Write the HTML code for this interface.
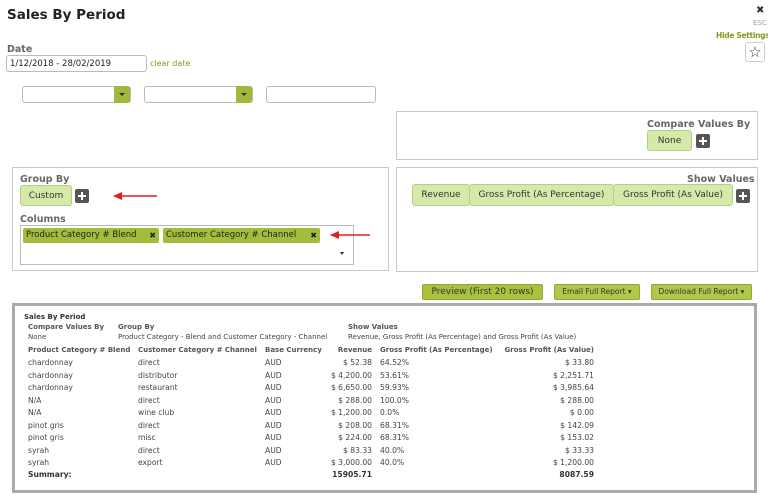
<!DOCTYPE html>
<html><head><meta charset="utf-8"><style>
*{box-sizing:border-box;margin:0;padding:0}
body{width:768px;height:495px;background:#fff;font-family:"DejaVu Sans","Liberation Sans",sans-serif;color:#333;position:relative;overflow:hidden}
.a{position:absolute;white-space:nowrap}
.lbl{font-weight:bold;color:#666;font-size:9.5px}
.inp{position:absolute;border:1px solid #bbb;border-radius:3px;background:#fff;height:17px}
.dd{position:absolute;right:0;top:-1px;width:16px;height:17px;background:#9fba3a;border-radius:0 3px 3px 0}
.dd:after{content:"";position:absolute;left:5px;top:7px;border:3px solid transparent;border-top:3px solid #333}
.box{position:absolute;border:1px solid #c8c8c8}
.gb{position:absolute;background:#d5eaa8;border:1px solid #b7cc8a;border-radius:3px;font-size:9px;color:#333;text-align:center;white-space:nowrap}
.plus{position:absolute;width:14px;height:14px;background:#555;border-radius:2px}
.plus:before{content:"";position:absolute;left:3px;top:6px;width:8px;height:2px;background:#fff}
.plus:after{content:"";position:absolute;left:6px;top:3px;width:2px;height:8px;background:#fff}
.btn{position:absolute;background:#a8c23e;border:1px solid #8fa832;border-radius:2px;font-size:8.5px;text-align:center;color:#333;line-height:14px;white-space:nowrap}
.tag{position:absolute;background:#a3bd3a;border-radius:2px;font-size:8.5px;color:#222;line-height:15px;padding-left:3px;white-space:nowrap}
.r{position:absolute;font-size:7.6px;color:#444;white-space:nowrap}
.b{font-weight:bold;color:#555;font-size:7px}
.rt{text-align:right}
</style></head><body>
<div class="a" style="left:7px;top:7px;font-size:13.5px;font-weight:bold;color:#222">Sales By Period</div>
<div class="a" style="left:756px;top:5px;font-size:10px;font-weight:bold">✖</div>
<div class="a" style="left:753px;top:19px;font-size:7px;color:#999">ESC</div>
<div class="a" style="left:716px;top:31px;font-size:7.5px;color:#7f9a1e;font-weight:bold;letter-spacing:-0.3px">Hide Settings</div>
<div class="a" style="left:745px;top:42px;width:20px;height:20px;border:1px solid #ccc;border-radius:3px;font-size:15px;line-height:18px;text-align:center">☆</div>
<div class="a lbl" style="left:7px;top:44px">Date</div>
<div class="inp" style="left:6px;top:55px;width:141px;font-size:8.5px;padding:3px 0 0 3px;color:#222">1/12/2018 - 28/02/2019</div>
<div class="a" style="left:150px;top:59px;font-size:8px;color:#7f9a1e">clear date</div>
<div class="inp" style="left:22px;top:86px;width:109px"><div class="dd"></div></div>
<div class="inp" style="left:144px;top:86px;width:109px"><div class="dd"></div></div>
<div class="inp" style="left:266px;top:86px;width:110px"></div>

<div class="box" style="left:396px;top:111px;width:362px;height:49px"></div>
<div class="a lbl" style="left:647px;top:119px">Compare Values By</div>
<div class="gb" style="left:647px;top:130px;width:45px;height:21px;line-height:20px">None</div>
<div class="plus" style="left:696px;top:134px"></div>

<div class="box" style="left:12px;top:167px;width:377px;height:104px"></div>
<div class="a lbl" style="left:20px;top:174px">Group By</div>
<div class="gb" style="left:20px;top:185px;width:52px;height:21px;line-height:20px">Custom</div>
<div class="plus" style="left:75px;top:189px"></div>
<svg class="a" style="left:112px;top:191px" width="46" height="10"><path d="M2 5H45" stroke="#e02020" stroke-width="1.5"/><path d="M1 5L10 1V9Z" fill="#e02020"/></svg>
<div class="a lbl" style="left:20px;top:214px">Columns</div>
<div class="inp" style="left:20px;top:225px;width:334px;height:40px;border-radius:0"></div>
<div class="tag" style="left:23px;top:228px;width:136px">Product Category # Blend<span style="position:absolute;right:3px;font-size:8px">✖</span></div>
<div class="tag" style="left:163px;top:228px;width:157px">Customer Category # Channel<span style="position:absolute;right:3px;font-size:8px">✖</span></div>
<svg class="a" style="left:329px;top:230px" width="42" height="10"><path d="M2 5H41" stroke="#e02020" stroke-width="1.5"/><path d="M1 5L10 1V9Z" fill="#e02020"/></svg>
<div class="a" style="left:340px;top:252px;border:2.5px solid transparent;border-top:3px solid #333"></div>

<div class="box" style="left:396px;top:167px;width:362px;height:105px"></div>
<div class="a lbl" style="left:687px;top:174px">Show Values</div>
<div class="gb" style="left:412px;top:184px;width:58px;height:22px;line-height:21px">Revenue</div>
<div class="gb" style="left:469px;top:184px;width:145px;height:22px;line-height:21px">Gross Profit (As Percentage)</div>
<div class="gb" style="left:613px;top:184px;width:120px;height:22px;line-height:21px">Gross Profit (As Value)</div>
<div class="plus" style="left:736px;top:189px"></div>

<div class="btn" style="left:422px;top:284px;width:121px;height:16px;font-size:9px">Preview (First 20 rows)</div>
<div class="btn" style="left:554px;top:284px;width:86px;height:16px;font-size:7.5px;background:#b0c84a">Email Full Report ▾</div>
<div class="btn" style="left:651px;top:284px;width:101px;height:16px;font-size:7.5px;background:#b0c84a">Download Full Report ▾</div>

<div class="a" style="left:12px;top:303px;width:745px;height:190px;border:3px solid #aaa"></div>
<div class="r b" style="left:24px;top:313px;color:#333">Sales By Period</div>
<div class="r b" style="left:28px;top:323px">Compare Values By</div>
<div class="r" style="left:28px;top:333px;font-size:7px">None</div>
<div class="r b" style="left:118px;top:323px">Group By</div>
<div class="r" style="left:118px;top:333px;font-size:7px">Product Category - Blend and Customer Category - Channel</div>
<div class="r b" style="left:348px;top:323px">Show Values</div>
<div class="r" style="left:348px;top:333px;font-size:7px">Revenue, Gross Profit (As Percentage) and Gross Profit (As Value)</div>
<div class="r b" style="left:28px;top:346px">Product Category # Blend</div>
<div class="r b" style="left:138px;top:346px">Customer Category # Channel</div>
<div class="r b" style="left:265px;top:346px">Base Currency</div>
<div class="r b rt" style="left:300px;width:72px;top:346px">Revenue</div>
<div class="r b" style="left:380px;top:346px">Gross Profit (As Percentage)</div>
<div class="r b rt" style="left:480px;width:114px;top:346px">Gross Profit (As Value)</div>
<div id="rows"></div>
<script>
var d=[["chardonnay","direct","$ 52.38","64.52%","$ 33.80"],["chardonnay","distributor","$ 4,200.00","53.61%","$ 2,251.71"],["chardonnay","restaurant","$ 6,650.00","59.93%","$ 3,985.64"],["N/A","direct","$ 288.00","100.0%","$ 288.00"],["N/A","wine club","$ 1,200.00","0.0%","$ 0.00"],["pinot gris","direct","$ 208.00","68.31%","$ 142.09"],["pinot gris","misc","$ 224.00","68.31%","$ 153.02"],["syrah","direct","$ 83.33","40.0%","$ 33.33"],["syrah","export","$ 3,000.00","40.0%","$ 1,200.00"]];
var h="";d.forEach(function(r,i){var y=358+i*12.5;h+='<div class="r" style="left:28px;top:'+y+'px">'+r[0]+'</div><div class="r" style="left:138px;top:'+y+'px">'+r[1]+'</div><div class="r" style="left:265px;top:'+y+'px">AUD</div><div class="r rt" style="left:300px;width:72px;top:'+y+'px">'+r[2]+'</div><div class="r" style="left:380px;top:'+y+'px">'+r[3]+'</div><div class="r rt" style="left:480px;width:114px;top:'+y+'px">'+r[4]+'</div>';});
h+='<div class="r b" style="left:28px;top:470px;color:#333;font-size:7.6px">Summary:</div><div class="r b rt" style="left:300px;width:72px;top:470px;color:#333;font-size:7.6px">15905.71</div><div class="r b rt" style="left:480px;width:114px;top:470px;color:#333;font-size:7.6px">8087.59</div>';
document.getElementById("rows").innerHTML=h;
</script>
</body></html>
